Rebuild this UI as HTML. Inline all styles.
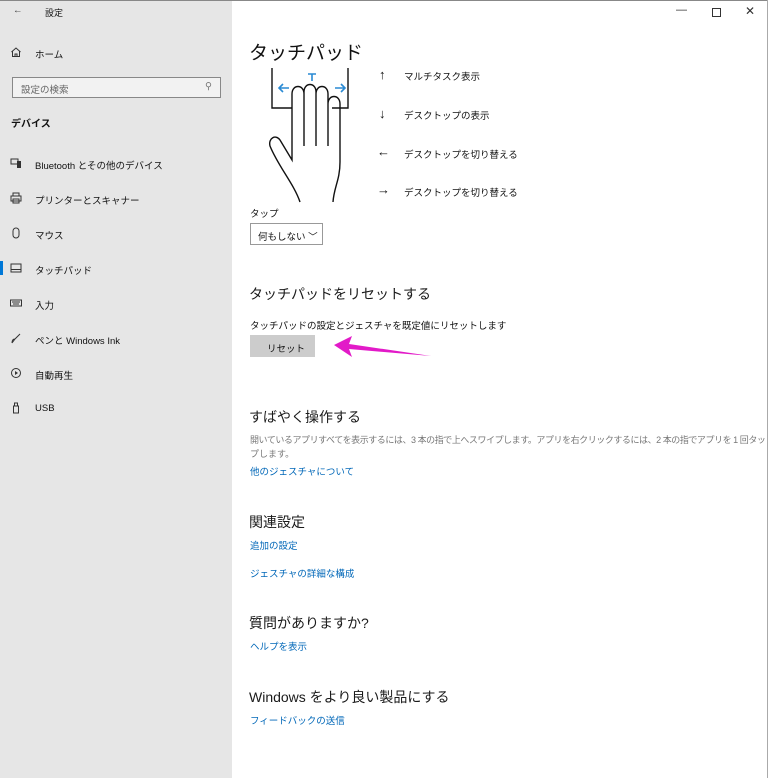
<!DOCTYPE html>
<html><head><meta charset="utf-8"><style>
*{margin:0;padding:0;box-sizing:border-box}
body{width:768px;height:778px;position:relative;overflow:hidden;background:#fff;font-family:"Liberation Sans","Noto Sans CJK JP",sans-serif;color:#111}
.sb{position:absolute;left:0;top:0;width:232px;height:778px;background:#e6e6e6}
.t{position:absolute;white-space:nowrap}
.s{font-size:9.5px}
.h{font-size:14px;color:#1a1a1a}
.l{font-size:9.5px;color:#0067b8}
.ic{position:absolute;left:10px;width:12px;height:12px}
.ar{position:absolute;font-size:13px;font-weight:bold;line-height:1}
</style></head><body>
<div class="sb"></div>
<div style="position:absolute;left:0;top:0;width:768px;height:1px;background:#888"></div>
<div style="position:absolute;right:0;top:0;width:1px;height:778px;background:#aaa"></div>
<div class="t s" style="left:13px;top:5px;color:#333">←</div>
<div class="t s" style="left:45px;top:6px;font-size:9px">設定</div>
<svg class="ic" style="top:46px" viewBox="0 0 12 12"><path d="M1.5 6L6 2l4.5 4M2.5 5v5.5h7V5M5 10.5V8h2v2.5" fill="none" stroke="#333"/></svg>
<div class="t s" style="left:35px;top:47px">ホーム</div>
<div style="position:absolute;left:12px;top:77px;width:209px;height:21px;border:1px solid #888;background:#f2f2f2"></div>
<div class="t s" style="left:21px;top:82px;color:#666">設定の検索</div>
<div class="t s" style="left:205px;top:81px;color:#777">⚲</div>
<div class="t" style="left:11px;top:115px;font-size:10px;font-weight:bold">デバイス</div>
<svg class="ic" style="top:157px" viewBox="0 0 12 12"><rect x="1" y="2" width="7" height="5" fill="none" stroke="#333"/><rect x="7" y="4" width="4" height="7" fill="#333"/></svg>
<div class="t s" style="left:35px;top:158px">Bluetooth とその他のデバイス</div>
<svg class="ic" style="top:192px" viewBox="0 0 12 12"><path d="M3 4V1h6v3M1 4h10v5H1zM3 7h6v4H3z" fill="none" stroke="#333"/></svg>
<div class="t s" style="left:35px;top:193px">プリンターとスキャナー</div>
<svg class="ic" style="top:227px" viewBox="0 0 12 12"><rect x="3" y="1" width="6" height="10" rx="3" fill="none" stroke="#333"/></svg>
<div class="t s" style="left:35px;top:228px">マウス</div>
<div style="position:absolute;left:0;top:261px;width:3px;height:14px;background:#0078d7"></div>
<svg class="ic" style="top:262px" viewBox="0 0 12 12"><rect x="1" y="2" width="10" height="8" fill="none" stroke="#333"/><path d="M1 7.5h10" stroke="#333"/></svg>
<div class="t s" style="left:35px;top:263px">タッチパッド</div>
<svg class="ic" style="top:297px" viewBox="0 0 12 12"><rect x="0.5" y="3" width="11" height="6" fill="none" stroke="#333"/><path d="M2 5h8M3 7h6" stroke="#333"/></svg>
<div class="t s" style="left:35px;top:298px">入力</div>
<svg class="ic" style="top:332px" viewBox="0 0 12 12"><path d="M2 11l3-4 5-5M5 7c-2 0-3 1-3 4" fill="none" stroke="#333"/></svg>
<div class="t s" style="left:35px;top:333px">ペンと Windows Ink</div>
<svg class="ic" style="top:367px" viewBox="0 0 12 12"><circle cx="6" cy="6" r="4.5" fill="none" stroke="#333"/><path d="M5 4v4l3-2z" fill="#333"/></svg>
<div class="t s" style="left:35px;top:368px">自動再生</div>
<svg class="ic" style="top:402px" viewBox="0 0 12 12"><rect x="3.5" y="4" width="5" height="7" fill="none" stroke="#333"/><rect x="4.5" y="1" width="3" height="3" fill="none" stroke="#333"/></svg>
<div class="t s" style="left:35px;top:403px">USB</div>

<div class="t" style="left:676px;top:4px;font-size:11px;color:#333">—</div>
<div style="position:absolute;left:712px;top:8px;width:9px;height:9px;border:1px solid #333"></div>
<div class="t" style="left:745px;top:4px;font-size:12px;color:#333">✕</div>

<div class="t" style="left:249px;top:38px;font-size:19px">タッチパッド</div>
<svg style="position:absolute;left:262px;top:62px" width="100" height="145" viewBox="0 0 100 145">
<g fill="none" stroke="#111" stroke-width="1.4">
<path d="M10 6v40h20M86 6v40H70"/>
<path d="M38 140C32 122 16 104 8 84C6 76 14 72 18 78L30 98L30 32C30 22 42 22 42 32L42 30C42 20 54 20 54 30L54 32C54 22 66 22 66 32L66 42C66 32 78 32 78 42L78 100C78 118 72 125 71 140"/>
<path d="M42 32v52M54 32v52M66 42v42"/>
</g>
<g fill="none" stroke="#2a8ad4" stroke-width="1.6"><path d="M17 26h10M21 22l-4 4 4 4M73 26h10M79 22l4 4-4 4"/><path d="M46 12h8M50 12v7"/></g>
</svg>
<div class="ar" style="left:379px;top:68px">↑</div><div class="t s" style="left:404px;top:69px">マルチタスク表示</div>
<div class="ar" style="left:379px;top:107px">↓</div><div class="t s" style="left:404px;top:108px">デスクトップの表示</div>
<div class="ar" style="left:377px;top:145px">←</div><div class="t s" style="left:404px;top:147px">デスクトップを切り替える</div>
<div class="ar" style="left:377px;top:183px">→</div><div class="t s" style="left:404px;top:185px">デスクトップを切り替える</div>
<div class="t s" style="left:250px;top:206px">タップ</div>
<div style="position:absolute;left:250px;top:223px;width:73px;height:22px;border:1px solid #999"></div>
<div class="t s" style="left:258px;top:229px">何もしない ﹀</div>

<div class="t h" style="left:249px;top:284px">タッチパッドをリセットする</div>
<div class="t s" style="left:250px;top:318px">タッチパッドの設定とジェスチャを既定値にリセットします</div>
<div style="position:absolute;left:250px;top:335px;width:65px;height:22px;background:#ccc"></div>
<div class="t s" style="left:267px;top:341px">リセット</div>
<svg style="position:absolute;left:330px;top:334px" width="105" height="25" viewBox="0 0 105 25"><path d="M4 11L22 2l-3 8 82 12-82-7 3 8z" fill="#e21ac8"/></svg>

<div class="t h" style="left:249px;top:407px">すばやく操作する</div>
<div class="t" style="left:250px;top:433px;color:#777;font-size:9px;letter-spacing:-0.45px">開いているアプリすべてを表示するには、3 本の指で上へスワイプします。アプリを右クリックするには、2 本の指でアプリを 1 回タッ</div>
<div class="t" style="left:250px;top:447px;color:#777;font-size:9px">プします。</div>
<div class="t l" style="left:250px;top:464px">他のジェスチャについて</div>
<div class="t h" style="left:249px;top:512px">関連設定</div>
<div class="t l" style="left:250px;top:538px">追加の設定</div>
<div class="t l" style="left:250px;top:566px">ジェスチャの詳細な構成</div>
<div class="t h" style="left:249px;top:613px">質問がありますか?</div>
<div class="t l" style="left:250px;top:639px">ヘルプを表示</div>
<div class="t h" style="left:249px;top:687px">Windows をより良い製品にする</div>
<div class="t l" style="left:250px;top:713px">フィードバックの送信</div>
</body></html>
